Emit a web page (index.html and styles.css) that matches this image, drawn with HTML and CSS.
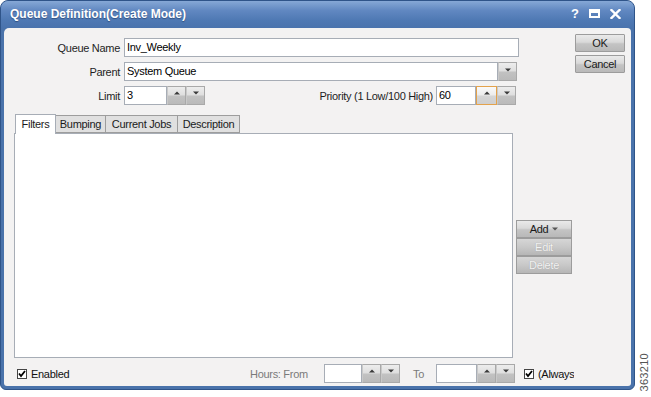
FILE: index.html
```html
<!DOCTYPE html>
<html>
<head>
<meta charset="utf-8">
<title>Queue Definition</title>
<link rel="stylesheet" href="styles.css">
</head>
<body>
<div class="stage">
  <div class="window">
    <div class="titlebar">
      <span class="title">Queue Definition(Create Mode)</span>
      <div class="tb-icons">
        <span class="tb-help">?</span>
        <svg class="tb-max" width="11" height="9" viewBox="0 0 11 9"><rect x="1" y="1" width="9" height="7" fill="none" stroke="#fff" stroke-width="2"/><rect x="1" y="1" width="9" height="3" fill="#fff"/></svg>
        <svg class="tb-close" width="11" height="10" viewBox="0 0 11 10"><path d="M1.5 1 L9.5 9 M9.5 1 L1.5 9" stroke="#fff" stroke-width="2.4" stroke-linecap="square"/></svg>
      </div>
    </div>
    <div class="panel">
      <div class="top">
        <div class="fields">
          <div class="row">
            <span class="lbl">Queue Name</span>
            <div class="input grow">Inv_Weekly</div>
          </div>
          <div class="row row-parent">
            <span class="lbl">Parent</span>
            <div class="input grow">System Queue</div>
            <div class="spin drop"><svg width="6" height="4" viewBox="0 0 6 4"><path d="M0 0.5 H6 L3 3.5 Z" fill="#3a3a3a"/></svg></div>
          </div>
          <div class="row row-limit">
            <span class="lbl">Limit</span>
            <div class="input w-limit">3</div>
            <div class="spin"><svg width="6" height="4" viewBox="0 0 6 4"><path d="M0 3.5 H6 L3 0.5 Z" fill="#3a3a3a"/></svg></div>
            <div class="spin"><svg width="6" height="4" viewBox="0 0 6 4"><path d="M0 0.5 H6 L3 3.5 Z" fill="#3a3a3a"/></svg></div>
            <span class="lbl-pri">Priority (1 Low/100 High)</span>
            <div class="input w-pri">60</div>
            <div class="spin focus"><svg width="6" height="4" viewBox="0 0 6 4"><path d="M0 3.5 H6 L3 0.5 Z" fill="#3a3a3a"/></svg></div>
            <div class="spin"><svg width="6" height="4" viewBox="0 0 6 4"><path d="M0 0.5 H6 L3 3.5 Z" fill="#3a3a3a"/></svg></div>
          </div>
        </div>
        <div class="buttons">
          <div class="btn">OK</div>
          <div class="btn">Cancel</div>
        </div>
      </div>
      <div class="tabs">
        <div class="tab active t-filters">Filters</div>
        <div class="tab t-bump">Bumping</div>
        <div class="tab t-jobs">Current Jobs</div>
        <div class="tab t-desc">Description</div>
      </div>
      <div class="middle">
        <div class="listbox"></div>
        <div class="side-btns">
          <div class="btn btn-side">Add <svg width="6" height="4" viewBox="0 0 6 4"><path d="M0 0.5 H6 L3 3.5 Z" fill="#555"/></svg></div>
          <div class="btn btn-side disabled">Edit</div>
          <div class="btn btn-side disabled">Delete</div>
        </div>
      </div>
      <div class="bottom">
        <div class="enabled">
          <svg class="chk" width="10" height="10" viewBox="0 0 10 10"><rect x="0.5" y="0.5" width="9" height="9" fill="#fff" stroke="#444"/><path d="M2 4.5 L4 7 L8 2" fill="none" stroke="#000" stroke-width="1.8"/></svg>
          <span>Enabled</span>
        </div>
        <span class="muted hours">Hours: From</span>
        <div class="input w-from"></div>
        <div class="spin"><svg width="6" height="4" viewBox="0 0 6 4"><path d="M0 3.5 H6 L3 0.5 Z" fill="#3a3a3a"/></svg></div>
        <div class="spin"><svg width="6" height="4" viewBox="0 0 6 4"><path d="M0 0.5 H6 L3 3.5 Z" fill="#3a3a3a"/></svg></div>
        <span class="muted to">To</span>
        <div class="input w-to"></div>
        <div class="spin"><svg width="6" height="4" viewBox="0 0 6 4"><path d="M0 3.5 H6 L3 0.5 Z" fill="#3a3a3a"/></svg></div>
        <div class="spin"><svg width="6" height="4" viewBox="0 0 6 4"><path d="M0 0.5 H6 L3 3.5 Z" fill="#3a3a3a"/></svg></div>
        <svg class="chk chk-always" width="10" height="10" viewBox="0 0 10 10"><rect x="0.5" y="0.5" width="9" height="9" fill="#fff" stroke="#444"/><path d="M2 4.5 L4 7 L8 2" fill="none" stroke="#000" stroke-width="1.8"/></svg>
        <span class="always">(Always</span>
      </div>
    </div>
  </div>
  <div class="side-label">363210</div>
</div>
</body>
</html>
```

FILE: styles.css
```css
* { box-sizing: border-box; }

html, body {
  margin: 0;
  padding: 0;
  background: #ffffff;
  width: 651px;
  height: 397px;
  overflow: hidden;
  font-family: "Liberation Sans", Arial, sans-serif;
  font-size: 11px;
  letter-spacing: -0.3px;
  color: #1e1e1e;
}

.stage {
  display: flex;
  align-items: flex-start;
  height: 397px;
}

.window {
  width: 635px;
  height: 390px;
  display: flex;
  flex-direction: column;
  background: #4a73ab;
  border: 1px solid #2f5489;
  border-radius: 8px 8px 6px 6px;
  overflow: hidden;
}

.titlebar {
  height: 27px;
  flex: none;
  display: flex;
  align-items: center;
  background: linear-gradient(to bottom, #86a8d6 0%, #6188c1 35%, #4f79b4 70%, #4a73ad 100%);
  padding: 0 0 2px 9px;
}

.title {
  color: #ffffff;
  font-weight: bold;
  font-size: 12px;
  letter-spacing: 0;
  text-shadow: 0 1px 1px rgba(20, 40, 80, 0.5);
}

.tb-icons {
  margin-left: auto;
  display: flex;
  align-items: center;
  gap: 10px;
  padding-right: 13px;
}

.tb-help {
  color: #fff;
  font-weight: bold;
  font-size: 13px;
  letter-spacing: 0;
}

.panel {
  flex: 1;
  margin: 0 3px 3px 3px;
  background: #f3f2f2;
  border-radius: 5px 4px 3px 3px;
  display: flex;
  flex-direction: column;
}

.top {
  display: flex;
  padding-top: 6px;
}

.fields {
  width: 515px;
  padding-top: 4px;
  display: flex;
  flex-direction: column;
  gap: 5px;
}

.row {
  display: flex;
  align-items: center;
  height: 19px;
}

.row-parent { padding-right: 2px; }
.row-limit { padding-right: 3px; }

.lbl {
  width: 120px;
  text-align: right;
  padding-right: 4px;
  flex: none;
}

.lbl-pri {
  flex: 1;
  text-align: right;
  padding-right: 3px;
}

.input {
  height: 19px;
  background: #ffffff;
  border: 1px solid #a7adb6;
  padding: 2px 2px 0 2px;
  color: #000;
  white-space: nowrap;
}

.grow { flex: 1; }
.w-limit { width: 43px; }
.w-pri { width: 40px; }
.w-from { width: 38px; }
.w-to { width: 41px; }

.spin {
  width: 19px;
  height: 19px;
  flex: none;
  display: flex;
  justify-content: center;
  align-items: flex-start;
  padding-top: 4px;
  border: 1px solid #a9a9a9;
  border-left-color: #c9c9c9;
  background: linear-gradient(to bottom, #ededed 0%, #dedede 48%, #c2c2c2 52%, #bababa 100%);
}

.spin.drop { padding-top: 5px; }

.spin.focus {
  width: 21px;
  border: 1px solid #e3a24c;
  background: linear-gradient(to bottom, #fafafa 0%, #ececec 48%, #d6d6d6 52%, #cfcfcf 100%);
}

.buttons {
  margin-left: auto;
  margin-right: 6px;
  width: 50px;
  display: flex;
  flex-direction: column;
  gap: 3px;
}

.btn {
  height: 18px;
  display: flex;
  align-items: center;
  justify-content: center;
  gap: 4px;
  color: #1a1a1a;
  border: 1px solid #9c9c9c;
  border-radius: 1px;
  background: linear-gradient(to bottom, #eaeaea 0%, #d9d9d9 45%, #c4c4c4 55%, #b9b9b9 100%);
}

.btn.disabled {
  color: #f2f2f2;
  text-shadow: 0 0 1px #9a9a9a;
  background: linear-gradient(to bottom, #d6d6d6 0%, #c8c8c8 50%, #b6b6b6 100%);
}

.tabs {
  display: flex;
  margin-top: 9px;
  margin-left: 11px;
  height: 19px;
  align-items: flex-end;
  position: relative;
  z-index: 1;
}

.tab {
  height: 18px;
  display: flex;
  align-items: center;
  justify-content: center;
  background: #e0e0e0;
  border: 1px solid #9d9d9d;
  border-left: none;
  color: #1a1a1a;
}

.tab.active {
  height: 20px;
  margin-bottom: -1px;
  background: #ffffff;
  border: 1px solid #a7adb6;
  border-bottom: none;
  padding-bottom: 2px;
}

.t-filters { width: 41px; }
.t-bump { width: 50px; }
.t-jobs { width: 72px; }
.t-desc { width: 62px; }

.middle {
  display: flex;
  align-items: center;
  margin-left: 10px;
}

.listbox {
  width: 499px;
  height: 225px;
  background: #ffffff;
  border: 1px solid #a7adb6;
}

.side-btns {
  margin-left: 3px;
  width: 56px;
  display: flex;
  flex-direction: column;
  margin-top: 2px;
}

.btn-side { height: 18px; border-radius: 0; }

.bottom {
  display: flex;
  align-items: center;
  height: 21px;
  margin-top: 5px;
}

.enabled {
  width: 246px;
  padding-left: 13px;
  display: flex;
  align-items: center;
  gap: 4px;
  color: #111;
}

.chk { flex: none; }

.muted { color: #7a7a7a; }

.hours { width: 74px; }
.to { margin-left: 13px; width: 23px; }

.chk-always { margin-left: 9px; }

.always {
  margin-left: 4px;
  width: 36px;
  overflow: hidden;
  white-space: nowrap;
  color: #111;
}

.side-label {
  align-self: flex-end;
  margin-left: 3px;
  margin-bottom: 5px;
  writing-mode: vertical-rl;
  transform: rotate(180deg);
  font-size: 11px;
  letter-spacing: 0.3px;
  color: #555;
}
```
